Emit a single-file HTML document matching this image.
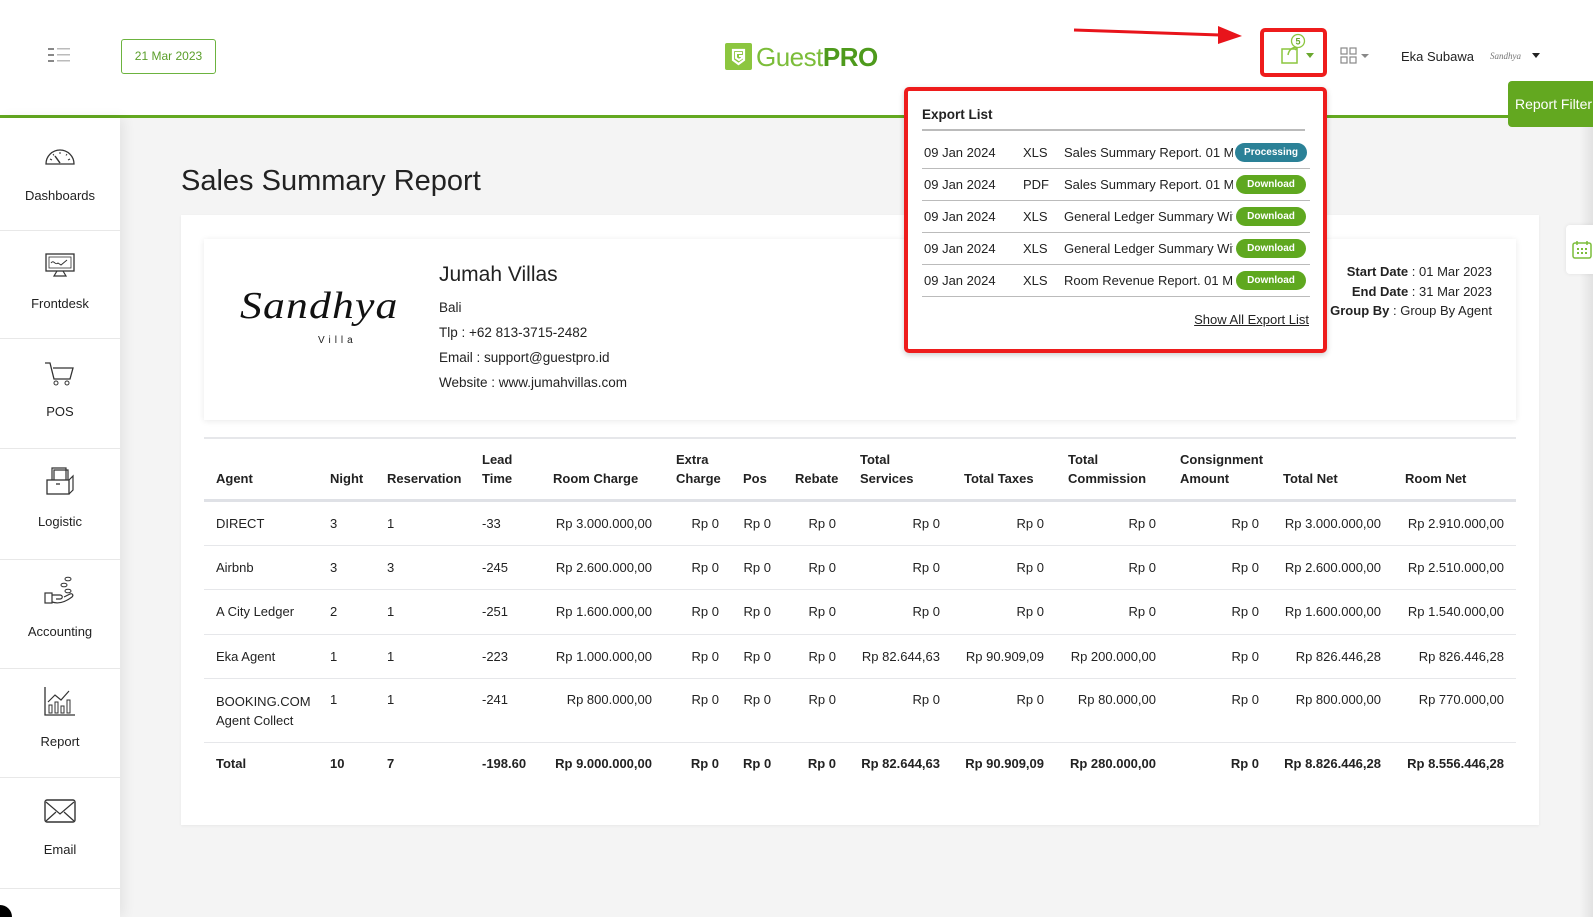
<!DOCTYPE html>
<html><head><meta charset="utf-8">
<style>
*{box-sizing:border-box;margin:0;padding:0}
body{width:1593px;height:917px;overflow:hidden;background:#f4f4f4;font-family:"Liberation Sans",sans-serif;color:#222;position:relative}
.abs{position:absolute}
#hdr{left:0;top:0;width:1593px;height:118px;background:#fff;border-bottom:3px solid #63a820}
#side{left:0;top:118px;width:120px;height:799px;background:#fff;box-shadow:4px 0 12px rgba(0,0,0,.07)}
.si{position:absolute;left:0;width:120px;height:110px;text-align:center;font-size:13px;color:#222}
.si svg{position:absolute;left:43px;top:26px}
.si span{position:absolute;left:0;right:0;top:70px}
.sdiv{position:absolute;left:0;width:120px;height:1px;background:#e8e8e8}
table{border-collapse:collapse;table-layout:fixed;font-size:13px}
td,th{padding:0 12px;vertical-align:middle;white-space:nowrap}
th{text-align:left;font-weight:bold;line-height:19px}
.r{text-align:right}
.ex{font-size:13px}
.badge{position:absolute;width:72px;height:19px;border-radius:10px;color:#fff;font-size:10px;font-weight:bold;text-align:center;line-height:19px}
</style></head><body>
<div id="hdr" class="abs"></div>
<svg class="abs" style="left:48px;top:47px" width="24" height="16"><g fill="#888"><rect x="0" y="1" width="6" height="2"/><rect x="0" y="7" width="6" height="2"/><rect x="0" y="13" width="6" height="2"/></g><g fill="#bbb"><rect x="9" y="1" width="13" height="1.5"/><rect x="9" y="7" width="13" height="1.5"/><rect x="9" y="13" width="13" height="1.5"/></g></svg>
<div class="abs" style="left:121px;top:39px;width:95px;height:35px;border:1.5px solid #6cb33f;border-radius:3px;color:#5a9e2a;font-size:12px;text-align:center;line-height:32px">21 Mar 2023</div>
<svg class="abs" style="left:725px;top:43px" width="27" height="27"><rect width="27" height="27" rx="2" fill="#8cc63f"/><path d="M8 7h11v10l-5.5 4-5.5-4z" fill="none" stroke="#fff" stroke-width="2.2"/><path d="M17 10h-6v5l3 2 3-2v-2h-3" fill="none" stroke="#fff" stroke-width="2"/></svg>
<div class="abs" style="left:756px;top:39px;font-size:26px;line-height:36px;letter-spacing:-.5px"><span style="color:#7cbd3a">Guest</span><span style="color:#4e9a1c;font-weight:bold">PRO</span></div>
<svg class="abs" style="left:1070px;top:20px" width="180" height="30"><path d="M4 10 L150 15" stroke="#e8141b" stroke-width="3"/><path d="M148 6 L172 16 L148 24 Z" fill="#e8141b"/></svg>
<div class="abs" style="left:1260px;top:28px;width:67px;height:49px;border:4px solid #ee1c1c;border-radius:5px"></div>
<svg class="abs" style="left:1280px;top:33px" width="46" height="34"><rect x="2" y="16" width="15" height="14" fill="none" stroke="#8cc63f" stroke-width="1.5"/><path d="M8 22c1-6 5-8 10-8" fill="none" stroke="#8cc63f" stroke-width="1.5"/><path d="M15 11l3 3-3 3" fill="none" stroke="#8cc63f" stroke-width="1.5"/><circle cx="18" cy="8" r="6.5" fill="#fff" stroke="#8cc63f" stroke-width="1.3"/><text x="18" y="11.5" font-size="9" font-weight="bold" text-anchor="middle" fill="#6aa82e" font-family="Liberation Sans">5</text><path d="M26 20h8l-4 5z" fill="#6aa82e"/></svg>
<svg class="abs" style="left:1340px;top:47px" width="32" height="18"><g fill="none" stroke="#888" stroke-width="1.2"><rect x="1" y="1" width="6" height="6"/><rect x="10" y="1" width="6" height="6"/><rect x="1" y="10" width="6" height="6"/><rect x="10" y="10" width="6" height="6"/></g><path d="M21 7h8l-4 4z" fill="#888"/></svg>
<div class="abs" style="left:1401px;top:49px;font-size:13px">Eka Subawa</div>
<div class="abs" style="left:1490px;top:51px;font-family:'Liberation Serif',serif;font-style:italic;font-size:9px;color:#777">Sandhya</div>
<svg class="abs" style="left:1532px;top:53px" width="10" height="6"><path d="M0 0h8l-4 5z" fill="#222"/></svg>
<div class="abs" style="left:1508px;top:81px;width:85px;height:46px;background:#63a820;border-radius:4px 0 0 4px;color:#fff;font-size:14px;line-height:46px;padding-left:7px">Report Filter</div>

<div id="side" class="abs">
<div class="si" style="top:0"><svg width="34" height="26" viewBox="0 0 34 26"><path d="M3 20a14 14 0 0 1 28 0z" fill="none" stroke="#333" stroke-width="1.3"/><path d="M17 19l-5-7" stroke="#333" stroke-width="1.5"/><g stroke="#333"><path d="M7 15l2 1M10 10l1 1.5M17 8v2M24 10l-1 1.5M27 15l-2 1"/></g></svg><span>Dashboards</span></div>
<div class="sdiv" style="top:112px"></div>
<div class="si" style="top:108px"><svg width="34" height="26" viewBox="0 0 34 26"><rect x="3" y="2" width="28" height="17" fill="none" stroke="#333" stroke-width="1.3"/><rect x="6" y="5" width="22" height="11" fill="none" stroke="#333" stroke-width=".8"/><path d="M8 11c3-4 4 3 7 0l3 2 6-5" fill="none" stroke="#333"/><path d="M14 19l-3 5h12l-3-5" fill="none" stroke="#333" stroke-width="1.2"/></svg><span>Frontdesk</span></div>
<div class="sdiv" style="top:220px"></div>
<div class="si" style="top:216px"><svg width="34" height="28" viewBox="0 0 34 28"><path d="M2 3h5l4 16h16l3-11H10" fill="none" stroke="#333" stroke-width="1.3"/><circle cx="13" cy="23" r="2" fill="none" stroke="#333"/><circle cx="24" cy="23" r="2" fill="none" stroke="#333"/></svg><span>POS</span></div>
<div class="sdiv" style="top:330px"></div>
<div class="si" style="top:326px"><svg width="34" height="34" viewBox="0 0 34 34" style="top:20px"><path d="M9 16V4h14v12M11 16V6h14v10" fill="none" stroke="#333" stroke-width="1.2"/><rect x="4" y="16" width="22" height="14" fill="none" stroke="#333" stroke-width="1.3"/><path d="M26 16l4-4v14l-4 4" fill="none" stroke="#333" stroke-width="1.2"/><path d="M13 20h4" stroke="#333" stroke-width="1.3"/></svg><span>Logistic</span></div>
<div class="sdiv" style="top:441px"></div>
<div class="si" style="top:436px"><svg width="34" height="32" viewBox="0 0 34 32" style="top:22px"><ellipse cx="25" cy="3" rx="3" ry="1.8" fill="none" stroke="#333"/><ellipse cx="21" cy="9" rx="3" ry="1.8" fill="none" stroke="#333"/><ellipse cx="25" cy="15" rx="3" ry="1.8" fill="none" stroke="#333"/><rect x="2" y="17" width="7" height="10" fill="none" stroke="#333" stroke-width="1.2"/><path d="M9 19h8c3 0 3 4 0 4h-4M9 26c6 2 12 1 20-5 2-2 0-4-2-3l-6 3" fill="none" stroke="#333" stroke-width="1.2"/></svg><span>Accounting</span></div>
<div class="sdiv" style="top:550px"></div>
<div class="si" style="top:546px"><svg width="34" height="32" viewBox="0 0 34 32" style="top:22px"><path d="M2 1v28h30" fill="none" stroke="#333" stroke-width="1.3"/><g fill="none" stroke="#333"><rect x="6" y="19" width="3" height="8"/><rect x="12" y="16" width="3" height="11"/><rect x="18" y="20" width="3" height="7"/><rect x="24" y="14" width="3" height="13"/></g><path d="M5 16l7-7 6 5 8-9" fill="none" stroke="#333" stroke-width="1.2"/></svg><span>Report</span></div>
<div class="sdiv" style="top:659px"></div>
<div class="si" style="top:654px"><svg width="34" height="28" viewBox="0 0 34 28" style="top:26px"><rect x="2" y="2" width="30" height="22" rx="2" fill="none" stroke="#333" stroke-width="1.4"/><path d="M3 4l14 12 14-12M3 23l10-9M31 23l-10-9" fill="none" stroke="#333" stroke-width="1.2"/></svg><span>Email</span></div>
<div class="sdiv" style="top:770px"></div>
</div>
<div class="abs" style="left:0;top:905px;width:12px;height:12px;background:#000;border-radius:0 12px 0 0"></div>

<div class="abs" style="left:181px;top:165px;font-size:29px;color:#222">Sales Summary Report</div>
<div class="abs" style="left:181px;top:215px;width:1358px;height:610px;background:#fff;box-shadow:0 1px 3px rgba(0,0,0,.05)"></div>
<div class="abs" style="left:204px;top:239px;width:1312px;height:181px;background:#fff;box-shadow:0 1px 6px rgba(0,0,0,.09)"></div>
<div class="abs" style="left:240px;top:284px;font-family:'Liberation Serif',serif;font-style:italic;font-size:38px;letter-spacing:1px;color:#111;transform:scaleX(1.15);transform-origin:left">Sandhya</div>
<div class="abs" style="left:318px;top:335px;font-size:10px;letter-spacing:4px;color:#222">Villa</div>
<div class="abs" style="left:439px;top:263px;font-size:21px">Jumah Villas</div>
<div class="abs" style="left:439px;top:295px;font-size:13.5px;line-height:25px">Bali<br>Tlp : +62 813-3715-2482<br>Email : support@guestpro.id<br>Website : www.jumahvillas.com</div>
<div class="abs" style="left:1250px;top:262px;width:242px;text-align:right;font-size:13px;line-height:19.5px"><b>Start Date</b> : 01 Mar 2023<br><b>End Date</b> : 31 Mar 2023<br><b>Group By</b> : Group By Agent</div>

<table class="abs" style="left:204px;top:437px;width:1312px;border-top:2px solid #e6e7ea">
<colgroup><col style="width:114px"><col style="width:57px"><col style="width:95px"><col style="width:71px"><col style="width:123px"><col style="width:67px"><col style="width:52px"><col style="width:65px"><col style="width:104px"><col style="width:104px"><col style="width:112px"><col style="width:103px"><col style="width:122px"><col style="width:123px"></colgroup>
<tr style="height:62px;border-bottom:3px solid #dfe1e6"><th style="vertical-align:bottom;padding-bottom:11px">Agent</th><th style="vertical-align:bottom;padding-bottom:11px">Night</th><th style="vertical-align:bottom;padding-bottom:11px">Reservation</th><th>Lead<br>Time</th><th style="vertical-align:bottom;padding-bottom:11px">Room Charge</th><th>Extra<br>Charge</th><th style="vertical-align:bottom;padding-bottom:11px">Pos</th><th style="vertical-align:bottom;padding-bottom:11px">Rebate</th><th>Total<br>Services</th><th style="vertical-align:bottom;padding-bottom:11px">Total Taxes</th><th>Total<br>Commission</th><th>Consignment<br>Amount</th><th style="vertical-align:bottom;padding-bottom:11px">Total Net</th><th style="vertical-align:bottom;padding-bottom:11px">Room Net</th></tr>
<tr style="height:45px;border-bottom:1.5px solid #e6e7ea"><td>DIRECT</td><td>3</td><td>1</td><td>-33</td><td class="r">Rp 3.000.000,00</td><td class="r">Rp 0</td><td class="r">Rp 0</td><td class="r">Rp 0</td><td class="r">Rp 0</td><td class="r">Rp 0</td><td class="r">Rp 0</td><td class="r">Rp 0</td><td class="r">Rp 3.000.000,00</td><td class="r">Rp 2.910.000,00</td></tr>
<tr style="height:44px;border-bottom:1.5px solid #e6e7ea"><td>Airbnb</td><td>3</td><td>3</td><td>-245</td><td class="r">Rp 2.600.000,00</td><td class="r">Rp 0</td><td class="r">Rp 0</td><td class="r">Rp 0</td><td class="r">Rp 0</td><td class="r">Rp 0</td><td class="r">Rp 0</td><td class="r">Rp 0</td><td class="r">Rp 2.600.000,00</td><td class="r">Rp 2.510.000,00</td></tr>
<tr style="height:45px;border-bottom:1.5px solid #e6e7ea"><td>A City Ledger</td><td>2</td><td>1</td><td>-251</td><td class="r">Rp 1.600.000,00</td><td class="r">Rp 0</td><td class="r">Rp 0</td><td class="r">Rp 0</td><td class="r">Rp 0</td><td class="r">Rp 0</td><td class="r">Rp 0</td><td class="r">Rp 0</td><td class="r">Rp 1.600.000,00</td><td class="r">Rp 1.540.000,00</td></tr>
<tr style="height:44px;border-bottom:1.5px solid #e6e7ea"><td>Eka Agent</td><td>1</td><td>1</td><td>-223</td><td class="r">Rp 1.000.000,00</td><td class="r">Rp 0</td><td class="r">Rp 0</td><td class="r">Rp 0</td><td class="r">Rp 82.644,63</td><td class="r">Rp 90.909,09</td><td class="r">Rp 200.000,00</td><td class="r">Rp 0</td><td class="r">Rp 826.446,28</td><td class="r">Rp 826.446,28</td></tr>
<tr style="height:64px;border-bottom:1.5px solid #e6e7ea"><td style="vertical-align:top;padding-top:13px;line-height:19px;white-space:normal">BOOKING.COM Agent Collect</td><td style="vertical-align:top;padding-top:13px">1</td><td style="vertical-align:top;padding-top:13px">1</td><td style="vertical-align:top;padding-top:13px">-241</td><td class="r" style="vertical-align:top;padding-top:13px">Rp 800.000,00</td><td class="r" style="vertical-align:top;padding-top:13px">Rp 0</td><td class="r" style="vertical-align:top;padding-top:13px">Rp 0</td><td class="r" style="vertical-align:top;padding-top:13px">Rp 0</td><td class="r" style="vertical-align:top;padding-top:13px">Rp 0</td><td class="r" style="vertical-align:top;padding-top:13px">Rp 0</td><td class="r" style="vertical-align:top;padding-top:13px">Rp 80.000,00</td><td class="r" style="vertical-align:top;padding-top:13px">Rp 0</td><td class="r" style="vertical-align:top;padding-top:13px">Rp 800.000,00</td><td class="r" style="vertical-align:top;padding-top:13px">Rp 770.000,00</td></tr>
<tr style="height:43px;font-weight:bold"><td>Total</td><td>10</td><td>7</td><td>-198.60</td><td class="r">Rp 9.000.000,00</td><td class="r">Rp 0</td><td class="r">Rp 0</td><td class="r">Rp 0</td><td class="r">Rp 82.644,63</td><td class="r">Rp 90.909,09</td><td class="r">Rp 280.000,00</td><td class="r">Rp 0</td><td class="r">Rp 8.826.446,28</td><td class="r">Rp 8.556.446,28</td></tr>
</table>

<div class="abs" style="left:1580px;top:127px;width:13px;height:790px;background:linear-gradient(90deg,#f4f4f4,#e2e2e2)"></div>
<div class="abs" style="left:1566px;top:225px;width:27px;height:49px;background:#fff;border-radius:4px 0 0 4px;box-shadow:0 0 4px rgba(0,0,0,.08)"></div>
<svg class="abs" style="left:1572px;top:240px" width="21" height="19"><rect x="1" y="3" width="18" height="15" rx="2" fill="none" stroke="#7cbd3a" stroke-width="1.5"/><path d="M5 1v4M15 1v4" stroke="#7cbd3a" stroke-width="1.5"/><g fill="#7cbd3a"><rect x="5" y="8" width="2" height="2"/><rect x="9" y="8" width="2" height="2"/><rect x="13" y="8" width="2" height="2"/><rect x="5" y="12" width="2" height="2"/><rect x="9" y="12" width="2" height="2"/><rect x="13" y="12" width="2" height="2"/></g></svg>

<div class="abs" style="left:904px;top:87px;width:423px;height:266px;background:#fff;border:4px solid #ee1c1c;border-radius:5px;box-shadow:0 2px 6px rgba(0,0,0,.2)">
<div class="abs" style="left:14px;top:16px;font-size:13.5px;font-weight:bold">Export List</div>
<div class="abs" style="left:14px;top:38px;width:383px;height:1.5px;background:#bbb"></div>
</div>
<div class="abs ex" style="left:922px;top:137px;width:388px;height:160px">
<div style="position:absolute;top:0;left:0;width:388px;height:32px;border-bottom:1.5px solid #bbb"></div>
<div style="position:absolute;top:32px;left:0;width:388px;height:32px;border-bottom:1.5px solid #bbb"></div>
<div style="position:absolute;top:64px;left:0;width:388px;height:32px;border-bottom:1.5px solid #bbb"></div>
<div style="position:absolute;top:96px;left:0;width:388px;height:32px;border-bottom:1.5px solid #bbb"></div>
<div style="position:absolute;top:128px;left:0;width:388px;height:32px;border-bottom:1.5px solid #bbb"></div>
</div>
<div class="abs ex" style="left:924px;top:137px;line-height:32px">09 Jan 2024<br>09 Jan 2024<br>09 Jan 2024<br>09 Jan 2024<br>09 Jan 2024</div>
<div class="abs ex" style="left:1023px;top:137px;line-height:32px">XLS<br>PDF<br>XLS<br>XLS<br>XLS</div>
<div class="abs ex" style="left:1064px;top:137px;width:169px;overflow:hidden;white-space:nowrap;line-height:32px">Sales Summary Report. 01 Mar<br>Sales Summary Report. 01 Mar<br>General Ledger Summary Wit<br>General Ledger Summary Wit<br>Room Revenue Report. 01 Mar</div>
<div class="badge" style="left:1235px;top:143px;background:#2b8197">Processing</div>
<div class="badge" style="left:1236px;top:175px;background:#5fa81f;width:70px">Download</div>
<div class="badge" style="left:1236px;top:207px;background:#5fa81f;width:70px">Download</div>
<div class="badge" style="left:1236px;top:239px;background:#5fa81f;width:70px">Download</div>
<div class="badge" style="left:1236px;top:271px;background:#5fa81f;width:70px">Download</div>
<div class="abs" style="left:1150px;top:312px;width:159px;text-align:right;font-size:13px;text-decoration:underline">Show All Export List</div>
</body></html>
